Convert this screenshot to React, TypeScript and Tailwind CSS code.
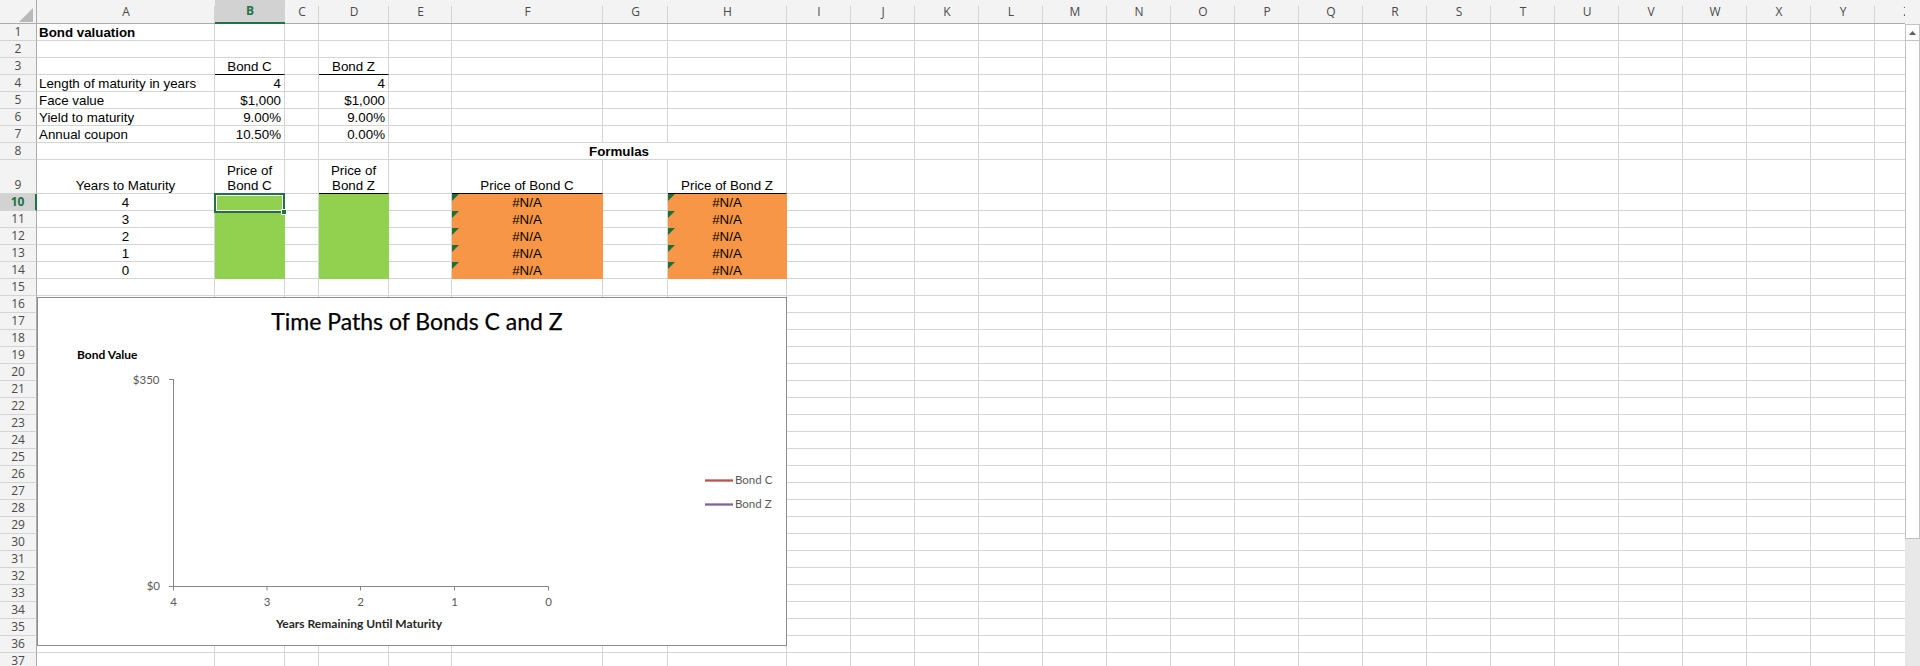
import type { ReactNode } from "react";

type CellSpec = {
  t?: string;
  align?: "l" | "c" | "r";
  bold?: boolean;
  fill?: string;
  bb?: boolean;
  tri?: boolean;
  span?: number;
};

const COLS = [
  "A", "B", "C", "D", "E", "F", "G", "H",
  "I", "J", "K", "L", "M", "N", "O", "P", "Q", "R", "S", "T", "U", "V", "W", "X", "Y", "Z",
];

const GRID = "grid grid-cols-[37px_178px_70px_34px_70px_63px_151px_65px_119px_repeat(18,64px)]";

const GREEN = "#92d050";
const ORANGE = "#f79646";

const cells: Record<string, CellSpec> = {
  A1: { t: "Bond valuation", bold: true },
  B3: { t: "Bond C", align: "c", bb: true },
  D3: { t: "Bond Z", align: "c", bb: true },
  A4: { t: "Length of maturity in years" },
  B4: { t: "4", align: "r" },
  D4: { t: "4", align: "r" },
  A5: { t: "Face value" },
  B5: { t: "$1,000", align: "r" },
  D5: { t: "$1,000", align: "r" },
  A6: { t: "Yield to maturity" },
  B6: { t: "9.00%", align: "r" },
  D6: { t: "9.00%", align: "r" },
  A7: { t: "Annual coupon" },
  B7: { t: "10.50%", align: "r" },
  D7: { t: "0.00%", align: "r" },
  F8: { t: "Formulas", align: "c", bold: true, span: 3 },
  A9: { t: "Years to Maturity", align: "c" },
  B9: { t: "Price of\nBond C", align: "c", bb: true },
  D9: { t: "Price of\nBond Z", align: "c", bb: true },
  F9: { t: "Price of Bond C", align: "c", bb: true },
  H9: { t: "Price of Bond Z", align: "c", bb: true },
};

["4", "3", "2", "1", "0"].forEach((v, i) => {
  const r = 10 + i;
  cells[`A${r}`] = { t: v, align: "c" };
  cells[`B${r}`] = { fill: GREEN };
  cells[`D${r}`] = { fill: GREEN };
  cells[`F${r}`] = { t: "#N/A", align: "c", fill: ORANGE, tri: true };
  cells[`H${r}`] = { t: "#N/A", align: "c", fill: ORANGE, tri: true };
});

const ROWS = Array.from({ length: 37 }, (_, i) => i + 1);

function ErrorMark() {
  return (
    <svg className="absolute left-0 top-0" width="7" height="7" viewBox="0 0 7 7">
      <polygon points="0,0 7,0 0,7" fill="#1d6f3a" />
    </svg>
  );
}

function Cell({ spec }: { spec?: CellSpec }) {
  const s = spec ?? {};
  const justify =
    s.align === "c"
      ? "justify-center text-center"
      : s.align === "r"
        ? "justify-end pr-[3px] text-right"
        : "justify-start pl-[2px]";
  const span = s.span === 3 ? "col-span-3" : "";
  const borderB = s.bb ? "border-b-black" : s.fill ? "" : "border-b-[#d4d4d4]";
  const borderR = s.fill ? "" : "border-r-[#d4d4d4]";
  return (
    <div
      className={`relative flex items-end border-r border-b ${borderR} ${borderB} ${justify} ${span} ${
        s.bold ? "font-bold" : ""
      } whitespace-pre leading-[15px]`}
      style={
        s.fill
          ? { backgroundColor: s.fill, borderColor: s.fill, borderBottomColor: s.bb ? "#000" : s.fill }
          : undefined
      }
    >
      {s.tri && <ErrorMark />}
      {s.t && <span>{s.t}</span>}
    </div>
  );
}

function Row({ r }: { r: number }) {
  const h = r === 9 ? "h-[34px]" : "h-[17px]";
  const sel = r === 10;
  const out: ReactNode[] = [];
  let skip = 0;
  COLS.forEach((c) => {
    if (skip > 0) {
      skip--;
      return;
    }
    const spec = cells[`${c}${r}`];
    if (spec?.span) skip = spec.span - 1;
    out.push(<Cell key={c} spec={spec} />);
  });
  return (
    <div className={`${GRID} ${h}`}>
      <div
        className={`flex items-end justify-center border-b border-b-[#d4d4d4] font-['Open_Sans',sans-serif] text-[12px] leading-[16px] ${
          sel
            ? "border-r-2 border-r-[#217346] bg-[#d2d2d2] font-bold text-[#217346]"
            : "border-r border-r-[#ababab] bg-[#f3f3f3] text-[#4a4a4a]"
        }`}
      >
        {r}
      </div>
      {out}
    </div>
  );
}

function HeaderRow() {
  return (
    <div className={`${GRID} h-[24px] bg-[#f3f3f3]`}>
      <div className="relative border-b border-r border-b-[#ababab] border-r-[#ababab]">
        <svg className="absolute left-0 top-0" width="37" height="24" viewBox="0 0 37 24">
          <polygon points="33,8 33,22 19,22" fill="#b8b8b8" />
        </svg>
      </div>
      {COLS.map((c) => {
        const sel = c === "B";
        return (
          <div
            key={c}
            className={`relative flex items-center justify-center font-['Open_Sans',sans-serif] text-[12px] after:absolute after:right-0 after:top-[6px] after:bottom-0 after:w-px after:bg-[#d4d4d4] ${
              sel
                ? "border-b-2 border-b-[#217346] bg-[#d2d2d2] font-bold text-[#217346]"
                : "border-b border-b-[#ababab] text-[#4a4a4a]"
            }`}
          >
            {c}
          </div>
        );
      })}
    </div>
  );
}

function Chart() {
  const axis = "#868686";
  const label = "#595959";
  const ticks = [
    { x: 136.5, t: "4" },
    { x: 230, t: "3" },
    { x: 323.5, t: "2" },
    { x: 417.5, t: "1" },
    { x: 511.5, t: "0" },
  ];
  return (
    <div className="absolute left-[37px] top-[297px] h-[349px] w-[750px] border border-[#8c8c8c] bg-white">
      <svg
        className="absolute left-[-1px] top-[-1px] font-['Lato',sans-serif]"
        width="750"
        height="349"
        viewBox="0 0 750 349"
      >
        <text x="380" y="33" textAnchor="middle" fontSize="23" fill="#000" stroke="#000" strokeWidth="0.25">
          Time Paths of Bonds C and Z
        </text>
        <text x="40" y="62" fontSize="12" fontWeight="700" fill="#000">
          Bond Value
        </text>
        <text x="122.5" y="87" textAnchor="end" fontSize="11.5" fill={label}>
          $350
        </text>
        <text x="123" y="292.5" textAnchor="end" fontSize="11.5" fill={label}>
          $0
        </text>
        <line x1="136.5" y1="82" x2="136.5" y2="289.5" stroke={axis} strokeWidth="1" />
        <line x1="132" y1="82.5" x2="136.5" y2="82.5" stroke={axis} strokeWidth="1" />
        <line x1="132" y1="289.5" x2="511.5" y2="289.5" stroke={axis} strokeWidth="1" />
        {ticks.map((k) => (
          <g key={k.t}>
            <line x1={k.x} y1="289.5" x2={k.x} y2="293.5" stroke={axis} strokeWidth="1" />
            <text x={k.x} y="309" textAnchor="middle" fontSize="11.5" fill={label}>
              {k.t}
            </text>
          </g>
        ))}
        <text x="322" y="330.5" textAnchor="middle" fontSize="12" fontWeight="700" fill="#262626">
          Years Remaining Until Maturity
        </text>
        <line x1="668" y1="183.5" x2="696" y2="183.5" stroke="#c0504d" strokeWidth="2.3" />
        <text x="698" y="187" fontSize="11.5" fill={label}>
          Bond C
        </text>
        <line x1="668" y1="207.5" x2="696" y2="207.5" stroke="#8064a2" strokeWidth="2.3" />
        <text x="698" y="211" fontSize="11.5" fill={label}>
          Bond Z
        </text>
      </svg>
    </div>
  );
}

function Scrollbar() {
  return (
    <div className="flex w-[15px] flex-col bg-[#e8e8e8]">
      <div className="h-[24px] bg-[#f3f3f3]" />
      <div className="flex h-[17px] items-center justify-center border border-[#c2c2c2] bg-white">
        <svg width="7" height="4" viewBox="0 0 7 4">
          <polygon points="3.5,0 7,4 0,4" fill="#5f5f5f" />
        </svg>
      </div>
      <div className="h-[498px] border border-t-0 border-[#c2c2c2] bg-white" />
    </div>
  );
}

export default function App() {
  return (
    <div className="flex h-[666px] w-[1920px] overflow-hidden bg-white font-['Liberation_Sans',Arial,sans-serif] text-[13.33px] text-black">
      <div className="relative w-[1905px] overflow-hidden">
        <HeaderRow />
        {ROWS.map((r) => (
          <Row key={r} r={r} />
        ))}
        <Chart />
        <div className="absolute left-[214px] top-[193px] h-[20px] w-[71px] border-2 border-[#217346]">
          <div className="h-full w-full border border-white" />
          <div className="absolute bottom-[-4px] right-[-4px] h-[6px] w-[6px] border border-white bg-[#217346]" />
        </div>
      </div>
      <Scrollbar />
    </div>
  );
}
